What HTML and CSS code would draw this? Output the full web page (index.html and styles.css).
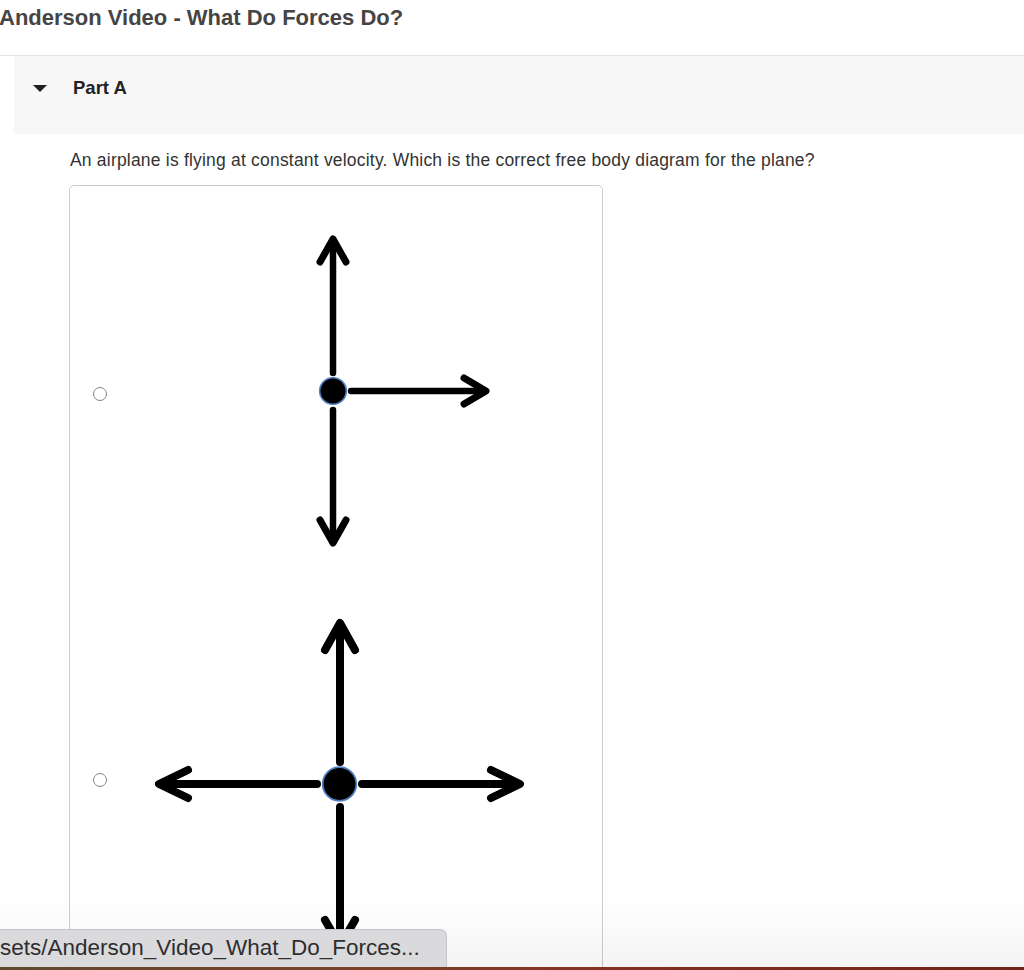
FILE: index.html
```html
<!DOCTYPE html>
<html lang="en">
<head>
<meta charset="utf-8">
<title>Anderson Video - What Do Forces Do?</title>
<link rel="stylesheet" href="styles.css">
</head>
<body>
<header class="title-bar">
  <h1 class="title">Anderson Video - What Do Forces Do?</h1>
</header>
<section class="part">
  <span class="caret"></span>
  <h2 class="part-name">Part A</h2>
</section>
<main class="content">
  <p class="question">An airplane is flying at constant velocity. Which is the correct free body diagram for the plane?</p>
  <div class="card">
    <div class="choice choice-1">
      <span class="radio"></span>
      <svg class="diagram" width="420" height="416" viewBox="130 186 420 416">
        <g fill="none" stroke="#000" stroke-linecap="round" stroke-linejoin="round">
          <line x1="333" y1="373" x2="333" y2="240" stroke-width="6.5"/>
          <polyline points="320,262 333,239 346,262" stroke-width="7"/>
          <line x1="333" y1="410" x2="333" y2="542" stroke-width="6.5"/>
          <polyline points="320,520 333,543 346,520" stroke-width="7"/>
          <line x1="351" y1="391" x2="485" y2="391" stroke-width="6.5"/>
          <polyline points="464,378 486,391 464,404" stroke-width="7"/>
        </g>
        <circle cx="333" cy="391" r="13.3" fill="#000" stroke="#4f7fc0" stroke-width="1.6"/>
      </svg>
    </div>
    <div class="choice choice-2">
      <span class="radio"></span>
      <svg class="diagram" width="420" height="356" viewBox="130 602 420 356">
        <g fill="none" stroke="#000" stroke-linecap="round" stroke-linejoin="round">
          <line x1="340" y1="762" x2="340" y2="625" stroke-width="8"/>
          <polyline points="325,650 340,623 355,650" stroke-width="8"/>
          <line x1="340" y1="807" x2="340" y2="944" stroke-width="8"/>
          <polyline points="325,920 340,946 355,920" stroke-width="8"/>
          <line x1="317" y1="784" x2="161" y2="784" stroke-width="8"/>
          <polyline points="188,770 159,784 188,798" stroke-width="8"/>
          <line x1="362" y1="784" x2="518" y2="784" stroke-width="8"/>
          <polyline points="491,770 520,784 491,798" stroke-width="8"/>
        </g>
        <circle cx="339.5" cy="784" r="16.8" fill="#000" stroke="#4f7fc0" stroke-width="1.8"/>
      </svg>
    </div>
  </div>
</main>
<div class="fade"></div>
<div class="status-url">sets/Anderson_Video_What_Do_Forces...</div>
<div class="desktop-edge"></div>
</body>
</html>
```

FILE: styles.css
```css
* {
  box-sizing: border-box;
}

html, body {
  margin: 0;
  padding: 0;
  background: #ffffff;
}

body {
  font-family: "Liberation Sans", Arial, Helvetica, sans-serif;
  color: #333333;
  overflow: hidden;
  height: 970px;
}

.title-bar {
  height: 56px;
  padding-top: 6px;
  border-bottom: 1px solid #e4e4e4;
}

.title {
  margin: 0;
  font-size: 22px;
  line-height: 23px;
  font-weight: 700;
  color: #454545;
  text-indent: -1px;
}

.part {
  margin-left: 14px;
  height: 78px;
  background: #f7f7f7;
  display: flex;
  align-items: flex-start;
  padding-left: 19px;
  padding-top: 21px;
}

.caret {
  width: 0;
  height: 0;
  margin-top: 8px;
  border-left: 7px solid transparent;
  border-right: 7px solid transparent;
  border-top: 7px solid #1e1e1e;
}

.part-name {
  margin: 0 0 0 26px;
  font-size: 18.5px;
  line-height: 22px;
  font-weight: 700;
  color: #222222;
}

.content {
  padding-left: 70px;
}

.question {
  margin: 17px 0 0;
  font-size: 17.5px;
  line-height: 19px;
  letter-spacing: 0.2px;
  color: #333333;
}

.card {
  margin: 15px 0 0 -1px;
  width: 534px;
  border: 1px solid #cccccc;
  border-radius: 5px;
  padding-bottom: 60px;
}

.choice {
  display: flex;
  align-items: center;
  padding-left: 23px;
}

.choice-1 {
  height: 416px;
}

.choice-2 {
  height: 356px;
}

.radio {
  flex: none;
  width: 14px;
  height: 14px;
  border: 1px solid #858585;
  border-radius: 50%;
  background: #ffffff;
}

.diagram {
  flex: none;
  display: block;
  margin-left: 23px;
  overflow: visible;
}

.fade {
  position: fixed;
  left: 0;
  right: 0;
  bottom: 3px;
  height: 70px;
  background: linear-gradient(to bottom, rgba(0, 0, 0, 0), rgba(0, 0, 0, 0.045));
  pointer-events: none;
}

.status-url {
  position: fixed;
  left: 0;
  top: 929px;
  width: 447px;
  height: 38px;
  background: #dadadd;
  border-top: 1px solid #c6c6ca;
  border-right: 1px solid #c6c6ca;
  border-top-right-radius: 7px;
  font-family: "Liberation Sans", Arial, sans-serif;
  font-size: 22.5px;
  line-height: 36px;
  color: #2e2e2e;
  white-space: nowrap;
  overflow: hidden;
}

.desktop-edge {
  position: fixed;
  left: 0;
  right: 0;
  bottom: 0;
  height: 3px;
  background: linear-gradient(90deg, #5f4a30 0%, #7a4326 35%, #86301f 60%, #6e2519 100%);
}
```
